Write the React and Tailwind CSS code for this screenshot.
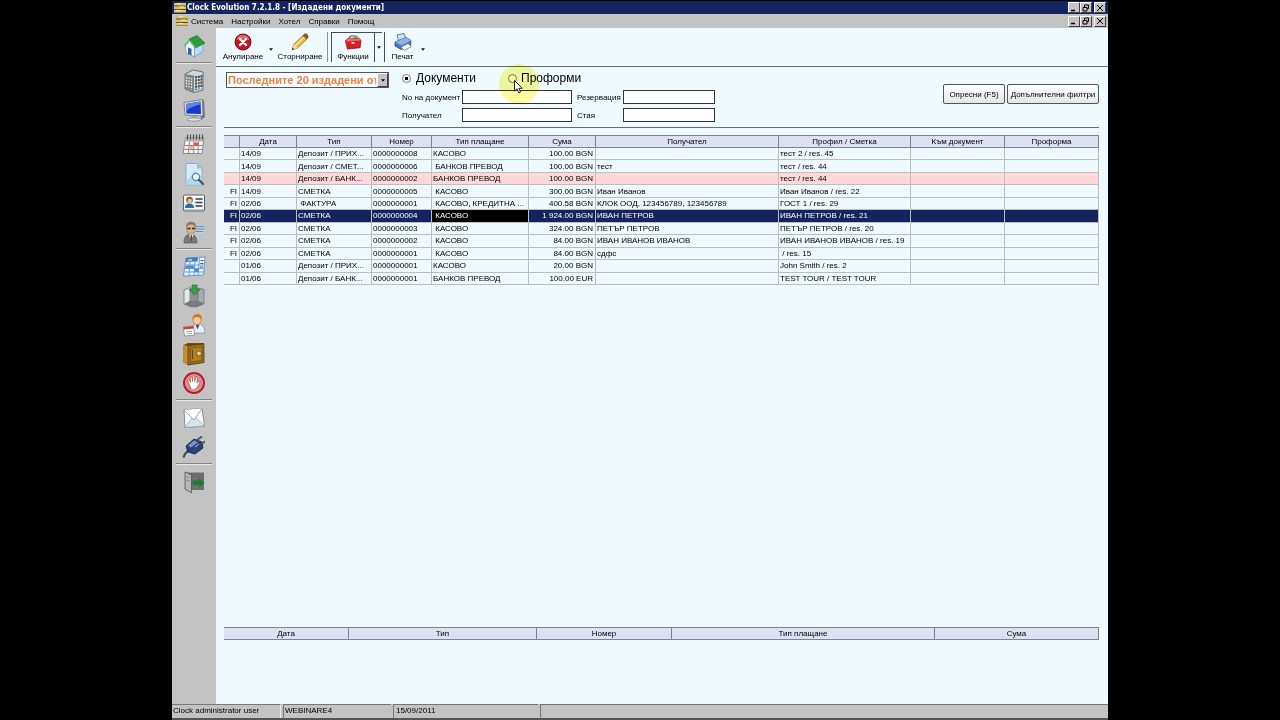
import React, { useState } from 'react';
import clsx from 'clsx';

/* ---------- Sidebar icons ---------- */

const HomeIcon = () => (
  <svg viewBox="0 0 24 24" className="size-6">
    <path d="M4 12v7l8 4V11z" fill="#7fb4e0" />
    <path d="M3.500 11.500 8 6l5 7v10l-9-4z" fill="#e9f4fc" stroke="#5d8fb8" strokeWidth=".6" />
    <path d="M12.500 12.500 21 9v8l-8.500 6z" fill="#bcdcf2" stroke="#5d8fb8" strokeWidth=".6" />
    <path d="m7 5 8-3.500 8 7.500-9.500 5z" fill="#2e9a38" stroke="#1c6a26" strokeWidth=".6" />
    <path d="M7 5 1.500 11.500l1.500.8L7.500 7l5 7 1.500-.5z" fill="#5cc460" />
    <path d="M6 13.500l3.500 1.300v6.700L6 20z" fill="#3a5f9a" />
  </svg>
);

const BuildingIcon = () => (
  <svg viewBox="0 0 24 24" className="size-6">
    <path d="m3 5 8-4 10 2v18l-9 2.500L3 20z" fill="#d3d8da" stroke="#55595d" strokeWidth=".8" />
    <path d="m3 5 9 1.500V23.500L3 20z" fill="#7d8488" />
    <path d="M4.500 8v11M7 8.500v11.500M9.500 9v12" stroke="#e8ecee" strokeWidth="1.300" strokeDasharray="1.600 1.200" />
    <path d="M14 7v14M16.800 6.700v13.500M19.400 6.200v13" stroke="#2f4f66" strokeWidth="1.900" strokeDasharray="2.200 1" />
    <path d="M14 10.200v2.200M19.400 12.500v2" stroke="#b64a50" strokeWidth="1.700" />
    <path d="M16.800 13v2" stroke="#3fa04c" strokeWidth="1.700" />
  </svg>
);

const MonitorIcon = () => (
  <svg viewBox="0 0 24 24" className="size-6">
    <path d="m18 4 4-2 1 17-4 3z" fill="#70777e" />
    <path d="M2 4.500 20.500 1.500 21 18 3 17z" fill="#d6dde2" stroke="#5d6368" strokeWidth=".7" />
    <path d="m4 6 14.500-2.500.5 12.500L4.500 15.500z" fill="#1836c8" />
    <path d="m4 6 14.500-2.500v3Q9 8 4.300 13z" fill="#5a83ee" />
    <path d="m9 17.500 6 .5 1 3H8z" fill="#a5abb0" />
    <ellipse cx="12" cy="21.500" rx="7" ry="1.600" fill="#dfe4e8" stroke="#6d7378" strokeWidth=".6" />
  </svg>
);

const CalendarIcon = () => (
  <svg viewBox="0 0 24 24" className="size-6">
    <path d="M3.500 4.500h18.500L20 20.500H1z" fill="#f4f2ef" stroke="#767676" strokeWidth=".8" />
    <path d="M3.500 4.500H22l-.5 4H3z" fill="#b6b2ae" />
    <path d="M5.500 1.500v5M8.500 1.500v5M11.500 1.500v5M14.500 1.500v5M17.500 1.500v5M20.500 1.500v5" stroke="#4e4e4e" strokeWidth="1.100" />
    <path d="M2.500 12.500h18.500M2 16.500h18.500M7.500 8.500l-1 12M12 8.500l-.5 12M16.500 8.500l-.5 12" stroke="#8f8b88" strokeWidth="1" />
    <path d="M12 9.500h4.500l-.3 3.500h-4.400z" fill="#e2583a" />
    <path d="M7.500 13h4v3h-4z" fill="#f3b29e" />
  </svg>
);

const SearchDocIcon = () => (
  <svg viewBox="0 0 24 24" className="size-6">
    <path d="M4 1.500h11l5 5V23H4z" fill="#d8ecf8" stroke="#7ba4bd" strokeWidth=".8" />
    <path d="M15 1.500v5h5z" fill="#93bcd6" />
    <path d="M4.500 19 13 9l7 6v7.500H4.500z" fill="#b3d8ee" />
    <circle cx="14" cy="15" r="3.600" fill="#eef8fd" stroke="#5b87a6" strokeWidth="1.300" />
    <path d="m16.800 17.800 4.200 4.200" stroke="#39566d" strokeWidth="2.200" strokeLinecap="round" />
  </svg>
);

const CardIcon = () => (
  <svg viewBox="0 0 24 24" className="size-6">
    <rect x="1.500" y="4" width="21" height="16" rx="1" fill="#f4f7f9" stroke="#5c666e" strokeWidth="1" />
    <path d="M2 18.500h20v1.200H2z" fill="#8a979f" />
    <circle cx="7.500" cy="9" r="3.300" fill="#8d5424" />
    <circle cx="7.800" cy="10" r="2.300" fill="#eec08f" />
    <path d="M3 17q0-4.500 4.500-4.500T12 17z" fill="#2d6fa4" />
    <path d="M13.500 8h7M13.500 11.500h7M13.500 15h7" stroke="#343f48" strokeWidth="1.400" />
  </svg>
);

const AgentIcon = () => (
  <svg viewBox="0 0 24 24" className="size-6">
    <path d="M13 5h9v8h-9z" fill="#b7d2e4" />
    <path d="M14 6.500h8M14 9h8M14 11.500h7" stroke="#658ca8" strokeWidth="1" />
    <path d="M2 23q-.5-8 6-9 7 0 7 9z" fill="#777b7e" stroke="#4c4f52" strokeWidth=".6" />
    <path d="m7 14 2 7 2.500-7z" fill="#f3f4f5" />
    <path d="m8.700 15 1.200 0 .3 5-1 1.500-1-1.500z" fill="#4b4b50" />
    <ellipse cx="9" cy="8.500" rx="4.600" ry="5.700" fill="#d6b18c" stroke="#77583b" strokeWidth=".5" />
    <path d="M4 8Q3.500 2 9 1.700T14 8q-1-3.500-5-3.500T4 8z" fill="#8b7761" />
    <path d="M5.500 8.500h3M10 8.500h3" stroke="#322b27" strokeWidth="1.300" />
  </svg>
);

const ScheduleIcon = () => (
  <svg viewBox="0 0 24 24" className="size-6">
    <path d="m4 3 19-1-1.500 18-20 1z" fill="#e6f2fb" stroke="#5584b8" strokeWidth=".8" />
    <path d="m4 3 12-.6-.4 4L3.500 7z" fill="#3a7fcc" />
    <path d="M6 5h4" stroke="#f2d067" strokeWidth="1.500" />
    <path d="M3.200 10h18.500M3 13.500h18.500M2.500 17h18.500M8 7l-1 14M13 7l-1 14M17.500 3l-1.500 17" stroke="#6fa1d3" strokeWidth="1" />
    <path d="M3.500 10.500h8.800v3H3.200zM12.500 14h4v3h-4z" fill="#4a8cd8" />
    <path d="M18.500 5.500h3M18.300 8.500h3M18 12h3" stroke="#345f94" strokeWidth="1.100" />
  </svg>
);

const ImportIcon = () => (
  <svg viewBox="0 0 24 24" className="size-6">
    <path d="M2 6 8 3.500V17l-6 3.500z" fill="#e4e7e8" stroke="#63676a" strokeWidth=".7" />
    <path d="M8 4h8v14H8z" fill="#8d9193" />
    <path d="m16 4 6 1.500V20l-6-3z" fill="#a9adae" stroke="#63676a" strokeWidth=".7" />
    <path d="m2 20.500 7-4h6.500l6.500 3.700-7 3H9z" fill="#777c7e" />
    <path d="M10 1h5v4.500h3L12.500 11 7 5.500h3z" fill="#35a047" stroke="#176b28" strokeWidth=".6" />
  </svg>
);

const StaffIcon = () => (
  <svg viewBox="0 0 24 24" className="size-6">
    <path d="M9 20q-.5-8.500 6-9.500 8 .5 8 9.500z" fill="#e8eef7" stroke="#7889a5" strokeWidth=".7" />
    <path d="m13.500 11.500 2 5 2-5z" fill="#2b4fa4" />
    <ellipse cx="15" cy="7" rx="4" ry="4.800" fill="#f6c898" stroke="#a9652e" strokeWidth=".5" />
    <path d="M10.500 7Q10 1 15.500 1T19.500 7q-1.500-3-4.500-3t-4.500 3z" fill="#d0791f" />
    <path d="m1.500 14 10-1 1 9-10 1z" fill="#fff" stroke="#77808c" strokeWidth=".7" />
    <path d="m1.500 14 10-1 .2 2.500-10 1z" fill="#d73a2f" />
    <path d="M4 18.500h6M4.200 20.700h6" stroke="#8f99a8" strokeWidth=".8" />
  </svg>
);

const SafeIcon = () => (
  <svg viewBox="0 0 24 24" className="size-6">
    <path d="M1.500 3 6 1h16v19.500L6 23l-4.500-2.500z" fill="#6f4c11" />
    <path d="M1.500 3 6 4v19l-4.500-2.500z" fill="#c0912c" />
    <path d="M6 3.500 22 2v18.500L6 23z" fill="#9b6f1b" stroke="#4d3409" strokeWidth=".7" />
    <path d="M8.500 6 20 5v13.500L8.500 20z" fill="#ad8026" stroke="#664711" strokeWidth=".6" />
    <circle cx="17" cy="11.500" r="2.400" fill="#efd27b" stroke="#60430e" strokeWidth=".7" />
    <path d="M10.500 8v9" stroke="#60430e" strokeWidth="1" />
  </svg>
);

const StopIcon = () => (
  <svg viewBox="0 0 24 24" className="size-6">
    <circle cx="12" cy="12" r="10" fill="#e09a9b" stroke="#b3202c" strokeWidth="2" />
    <circle cx="12" cy="12" r="8" fill="#dd8a8c" />
    <path
      d="M7 12.500 5.800 9q.8-1.200 1.600 0l1.200 2.500-.4-5q.9-1.500 1.700 0l.7 4 .2-5q1-1.300 1.800 0l.2 5 1-4.300q1-1.200 1.700.2l-.6 5.600 1.700-1.500q1.400-.3 1.300.8l-3.400 6.200q-3 2.500-5.500.5z"
      fill="#fff"
      stroke="#9b2830"
      strokeWidth=".5"
    />
  </svg>
);

const MailIcon = () => (
  <svg viewBox="0 0 24 24" className="size-6">
    <path d="m2 4 18-1.500L22.500 20 3 21.500z" fill="#f5f9fb" stroke="#6f7f8c" strokeWidth=".8" />
    <path d="M3 21.500 10 12l4-.5 8.500 8.500z" fill="#d5e2ea" stroke="#8797a3" strokeWidth=".6" />
    <path d="m2 4 10 10L20 2.500" fill="#fff" stroke="#8797a3" strokeWidth=".8" />
  </svg>
);

const PlugIcon = () => (
  <svg viewBox="0 0 24 24" className="size-6">
    <path d="M1.500 22.500Q3 17 8 15" fill="none" stroke="#3a424d" strokeWidth="2" />
    <path d="m4 11 8-7 8 3 1 6-8 6-7-2z" fill="#2a4277" stroke="#131f3e" strokeWidth=".8" />
    <path d="m6 10.500 6-5 4 2-7 5z" fill="#7792c8" />
    <path d="m15 5 5-3.500M19 9l4-2.500" stroke="#4d5560" strokeWidth="1.800" />
    <path d="m13 12 4-3" stroke="#b9c8e6" strokeWidth="1" />
  </svg>
);

const ExitIcon = () => (
  <svg viewBox="0 0 24 24" className="size-6">
    <path d="M3 2.500h19V20H3z" fill="#6b706e" />
    <path d="M3 2 9.500 5v18L3 19z" fill="#b4b8b7" stroke="#505452" strokeWidth=".8" />
    <path d="M4 6.500l4 1.500M4 10l4 1.200" stroke="#7b817f" strokeWidth=".8" />
    <path d="M10.500 10.500H17V8l5.500 4.700-5.500 4.800V15h-6.500z" fill="#1f7d33" />
  </svg>
);

/* ---------- Toolbar icons ---------- */

const CancelIcon = () => (
  <svg viewBox="0 0 20 20" className="size-5">
    <circle cx="10" cy="10" r="8" fill="#c31722" stroke="#7d0c14" strokeWidth="1" />
    <path d="M3.500 8Q5 3 10 3t6.500 5Q10 6 3.500 8z" fill="#e7686b" />
    <path d="m7 7 6 6M13 7l-6 6" stroke="#fff" strokeWidth="2.400" strokeLinecap="round" />
  </svg>
);

const PencilIcon = () => (
  <svg viewBox="0 0 20 20" className="size-5">
    <path d="m2 18 1.500-5.500L13 3.500l4 3.500-9.500 9z" fill="#f7b93c" stroke="#9a6312" strokeWidth=".7" />
    <path d="m5 14 9.500-9" stroke="#ffe49b" strokeWidth="1.600" />
    <path d="m13 3.500 2-1.800q2.500-.5 3.200 3.300L17 7z" fill="#8f5a3c" stroke="#5f3520" strokeWidth=".6" />
    <path d="m2 18 1.500-5.500 4 3.500z" fill="#f6dfb8" />
    <path d="m2 18 .6-2.200L4.300 17z" fill="#2b2b2b" />
  </svg>
);

const ToolboxIcon = () => (
  <svg viewBox="0 0 20 20" className="size-5">
    <path d="M6 6q0-3 4-3t5 2.500" fill="none" stroke="#68727a" strokeWidth="1.300" />
    <path d="m10 4 3-2 3 2.500-4 3z" fill="#7fae68" />
    <path d="m2 8 3-2.500 12 .5 1.500 2-1 7.500L4 17z" fill="#d5202a" stroke="#851018" strokeWidth=".7" />
    <path d="m2 8 3-2.500 12 .5 1.500 2-13 1z" fill="#f0686a" />
    <path d="M8.500 9.500h3v2h-3z" fill="#f0d9a2" />
  </svg>
);

const PrinterIcon = () => (
  <svg viewBox="0 0 20 20" className="size-5">
    <path d="m4 3 7-1.500 2 5.500-7 3z" fill="#cfe3f8" stroke="#3d689f" strokeWidth=".8" />
    <path d="m2 10 11-4.500 5 3-.5 5-9 4L2 14z" fill="#4577bf" stroke="#26487c" strokeWidth=".8" />
    <path d="m2 10 6.500 3.500L18 8.500l-5-3z" fill="#8db2e4" />
    <path d="m8 15 7-3.500 3.500 3-7.500 4z" fill="#fff" stroke="#3d689f" strokeWidth=".7" />
  </svg>
);

const AppIcon = () => (
  <svg viewBox="0 0 12 10" className="h-[10px] w-3">
    <path d="M0 0h12v10H0z" fill="#6b5318" />
    <path d="M0 0h12v2.500H0zM0 3.500h12V6H0zM0 7h12v2.500H0z" fill="#dcc274" />
    <path d="M3 .5h4M5 4h5M2 7.500h5" stroke="#fff2bd" strokeWidth=".8" />
  </svg>
);

const Caret = () => (
  <svg viewBox="0 0 5 3" className="h-[3px] w-1">
    <path d="M0 0h5L2.500 3z" fill="#111" />
  </svg>
);

const sidebarGroups = [
  [{ label: 'Home', icon: HomeIcon }],
  [
    { label: 'Hotel', icon: BuildingIcon },
    { label: 'Terminal', icon: MonitorIcon },
  ],
  [
    { label: 'Calendar', icon: CalendarIcon },
    { label: 'Search', icon: SearchDocIcon },
    { label: 'Profiles', icon: CardIcon },
    { label: 'Agents', icon: AgentIcon },
  ],
  [
    { label: 'Schedule', icon: ScheduleIcon },
    { label: 'Import', icon: ImportIcon },
    { label: 'Staff', icon: StaffIcon },
    { label: 'Safe', icon: SafeIcon },
    { label: 'Stop', icon: StopIcon },
  ],
  [
    { label: 'Mail', icon: MailIcon },
    { label: 'Connection', icon: PlugIcon },
  ],
  [{ label: 'Exit', icon: ExitIcon }],
];

const menuItems = ['Система', 'Настройки', 'Хотел', 'Справки', 'Помощ'];

const columns = [
  { label: '', width: 'w-4' },
  { label: 'Дата', width: 'w-[57px]' },
  { label: 'Тип', width: 'w-[75px]' },
  { label: 'Номер', width: 'w-[60px]' },
  { label: 'Тип плащане', width: 'w-[97px]' },
  { label: 'Сума', width: 'w-[67px]' },
  { label: 'Получател', width: 'w-[183px]' },
  { label: 'Профил / Сметка', width: 'w-[132px]' },
  { label: 'Към документ', width: 'w-[94px]' },
  { label: 'Проформа', width: 'w-[94px]' },
];

const rows = [
  ['', '14/09', 'Депозит / ПРИХ...', '0000000008', 'КАСОВО', '100.00 BGN', '', 'тест 2 / res. 45'],
  ['', '14/09', 'Депозит / СМЕТ...', '0000000006', ' БАНКОВ ПРЕВОД', '100.00 BGN', 'тест', 'тест / res. 44'],
  ['', '14/09', 'Депозит / БАНК...', '0000000002', 'БАНКОВ ПРЕВОД', '100.00 BGN', '', 'тест / res. 44'],
  ['FI', '14/09', 'СМЕТКА', '0000000005', ' КАСОВО', '300.00 BGN', 'Иван Иванов', 'Иван Иванов / res. 22'],
  ['FI', '02/06', ' ФАКТУРА', '0000000001', ' КАСОВО, КРЕДИТНА ...', '400.58 BGN', 'КЛОК ООД, 123456789, 123456789', 'ГОСТ 1 / res. 29'],
  ['FI', '02/06', 'СМЕТКА', '0000000004', ' КАСОВО', '1 924.00 BGN', 'ИВАН ПЕТРОВ', 'ИВАН ПЕТРОВ / res. 21'],
  ['FI', '02/06', 'СМЕТКА', '0000000003', ' КАСОВО', '324.00 BGN', 'ПЕТЪР ПЕТРОВ', 'ПЕТЪР ПЕТРОВ / res. 20'],
  ['FI', '02/06', 'СМЕТКА', '0000000002', ' КАСОВО', '84.00 BGN', 'ИВАН ИВАНОВ ИВАНОВ', 'ИВАН ИВАНОВ ИВАНОВ / res. 19'],
  ['FI', '02/06', 'СМЕТКА', '0000000001', ' КАСОВО', '84.00 BGN', 'сдфс', ' / res. 15'],
  ['', '01/06', 'Депозит / ПРИХ...', '0000000001', 'КАСОВО', '20.00 BGN', '', 'John Smith / res. 2'],
  ['', '01/06', 'Депозит / БАНК...', '0000000001', 'БАНКОВ ПРЕВОД', '100.00 EUR', '', 'TEST TOUR / TEST TOUR'],
];

const detailColumns = [
  { label: 'Дата', width: 'w-[125px]' },
  { label: 'Тип', width: 'w-[188px]' },
  { label: 'Номер', width: 'w-[135px]' },
  { label: 'Тип плащане', width: 'w-[263px]' },
  { label: 'Сума', width: 'w-[164px]' },
];

const WindowButton = ({ label, children }) => (
  <button
    aria-label={label}
    className="flex h-[11px] w-3 items-center justify-center border border-t-white border-l-white border-r-[#404040] border-b-[#404040] bg-[#c6c3c6]"
  >
    <svg viewBox="0 0 8 8" className="size-2" fill="none" stroke="#000">
      {children}
    </svg>
  </button>
);

const WindowButtons = () => (
  <div className="ml-auto flex pr-[2px]">
    <WindowButton label="Minimize">
      <path d="M1 6.500h4" strokeWidth="1.500" />
    </WindowButton>
    <WindowButton label="Restore">
      <path d="M2.500 3V1h4v3.500H5M1 3.500h4V7H1z" />
    </WindowButton>
    <div className="w-[2px]" />
    <WindowButton label="Close">
      <path d="m1 1 6 6M7 1 1 7" />
    </WindowButton>
  </div>
);

const ToolButton = ({ label, icon: Icon, className }) => (
  <button className={clsx('flex flex-col items-center', className)}>
    <Icon />
    <span className="leading-[10px]">{label}</span>
  </button>
);

const TableHead = ({ items }) => (
  <thead>
    <tr className="h-[13px] bg-[#dde2f2]">
      {items.map((col, i) => (
        <th
          key={i}
          className={clsx(
            'border-y border-r border-[#80838f] p-0 text-center font-normal whitespace-nowrap',
            col.width
          )}
        >
          {col.label}
        </th>
      ))}
    </tr>
  </thead>
);

const fieldClass = 'h-[14px] w-full border border-[#333] bg-white px-1 text-[8px] outline-none';

const App = () => {
  const [selected, setSelected] = useState(5);
  const [mode, setMode] = useState('documents');

  return (
    <div className="flex min-h-screen justify-center bg-black pt-px font-['Liberation_Sans',Arial,sans-serif] text-[8px] leading-[11px] text-black">
      <div className="flex w-full max-w-[936px] flex-col bg-[#c3c3c3]">
        {/* Title bar */}
        <header className="flex h-[13px] items-center bg-[#13245f] pl-[2px] text-white">
          <AppIcon />
          <h1 className="ml-px font-['DejaVu_Sans_Condensed','Liberation_Sans',sans-serif] font-bold">
            Clock Evolution 7.2.1.8 - [Издадени документи]
          </h1>
          <WindowButtons />
        </header>

        {/* Menu */}
        <nav className="flex h-[14px] items-center pl-1">
          <AppIcon />
          <div className="ml-[3px] flex gap-2">
            {menuItems.map((item) => (
              <button key={item}>{item}</button>
            ))}
          </div>
          <WindowButtons />
        </nav>

        <div className="flex flex-1">
          {/* Sidebar */}
          <aside className="w-11 shrink-0 pt-[3px]">
            {sidebarGroups.map((group, i) => (
              <div key={i}>
                {i > 0 && <div className="mx-1 my-[2px] h-[2px] border-t border-b border-t-[#858585] border-b-[#e6e6e6]" />}
                {group.map(({ label, icon: Icon }) => (
                  <button key={label} aria-label={label} className="flex h-[29px] w-full items-center justify-center">
                    <Icon />
                  </button>
                ))}
              </div>
            ))}
          </aside>

          <main className="flex min-w-0 flex-1 flex-col bg-[#eefafd]">
            {/* Toolbar */}
            <div className="flex h-[39px] items-stretch border-b border-[#666b6e] pt-1 pl-1">
              <ToolButton label="Анулиране" icon={CancelIcon} className="w-[46px]" />
              <button aria-label="Анулиране меню" className="flex w-[10px] items-center justify-center">
                <Caret />
              </button>
              <ToolButton label="Сторниране" icon={PencilIcon} className="w-12" />
              <div className="mb-1 ml-[3px] w-px bg-[#8b9194]" />
              <div className="mb-1 ml-[3px] flex border-t border-l border-[#4a4e50]">
                <ToolButton label="Функции" icon={ToolboxIcon} className="w-[42px]" />
                <button
                  aria-label="Функции меню"
                  className="flex w-2 items-center justify-center border-l border-[#4a4e50]"
                >
                  <Caret />
                </button>
              </div>
              <div className="mb-1 ml-[2px] w-px bg-[#4a4e50]" />
              <ToolButton label="Печат" icon={PrinterIcon} className="w-[35px]" />
              <button aria-label="Печат меню" className="flex w-[5px] items-center justify-center">
                <Caret />
              </button>
            </div>

            {/* Filters */}
            <div className="mr-[9px] ml-2 flex h-[61px] items-start border-b border-[#666b6e] pt-1 pl-[2px]">
              <div className="relative mt-px w-[163px]">
                <select
                  aria-label="Филтър"
                  className="h-4 w-full appearance-none border border-[#555] bg-[#f5fbfc] pr-3 pl-px text-[11px] leading-[14px] font-bold text-[#ee8146]"
                >
                  <option>Последните 20 издадени от всички</option>
                </select>
                <div className="pointer-events-none absolute top-px right-px flex h-[14px] w-[11px] items-center justify-center border border-t-white border-l-white border-r-[#404040] border-b-[#404040] bg-[#c6c3c6]">
                  <Caret />
                </div>
              </div>

              <div className="ml-[13px] w-[313px]">
                <div className="flex h-[14px] items-center text-[12px]">
                  <label className="flex w-[106px] items-center gap-[5px]">
                    <input
                      type="radio"
                      name="mode"
                      checked={mode === 'documents'}
                      onChange={() => setMode('documents')}
                      className="size-[9px] appearance-none rounded-full border border-[#777] bg-white bg-radial from-black from-30% to-white to-40%"
                    />
                    Документи
                  </label>
                  <label className="relative flex items-center gap-1">
                    <input
                      type="radio"
                      name="mode"
                      checked={mode === 'proforma'}
                      onChange={() => setMode('proforma')}
                      className="size-[9px] appearance-none rounded-full border border-[#777] bg-white checked:bg-radial checked:from-black checked:from-30% checked:to-white checked:to-40%"
                    />
                    Проформи
                    {/* Pointer highlight */}
                    <span className="pointer-events-none absolute -top-[9px] -left-[9px] size-10 rounded-full bg-[#fdfaa0] mix-blend-multiply" />
                    <svg viewBox="0 0 9 14" className="pointer-events-none absolute top-[7px] left-[6px] h-[14px] w-[9px]">
                      <path d="M.5.500v10.500L3 8.800l1.800 4 1.700-.8-1.700-3.700h3.500z" fill="#fff" stroke="#222" />
                    </svg>
                  </label>
                </div>
                <div className="mt-[5px] grid grid-cols-[60px_110px_51px_92px] items-center gap-y-1">
                  <label htmlFor="docNo" className="whitespace-nowrap">No на документ</label>
                  <input id="docNo" className={fieldClass} />
                  <label htmlFor="reservation" className="pl-[5px]">Резервация</label>
                  <input id="reservation" className={fieldClass} />
                  <label htmlFor="recipient">Получател</label>
                  <input id="recipient" className={fieldClass} />
                  <label htmlFor="room" className="pl-[5px]">Стая</label>
                  <input id="room" className={fieldClass} />
                </div>
              </div>

              <div className="mt-[13px] ml-auto flex gap-[2px]">
                <button className="h-5 w-[62px] rounded-xs border border-[#555] bg-linear-to-b from-white to-[#e4e8e9]">
                  Опресни (F5)
                </button>
                <button className="h-5 w-[92px] rounded-xs border border-[#555] bg-linear-to-b from-white to-[#e4e8e9] whitespace-nowrap">
                  Допълнителни филтри
                </button>
              </div>
            </div>

            {/* Documents */}
            <div className="mt-[7px] mr-[9px] ml-2 flex-1">
              <table className="h-[150px] w-full table-fixed border-separate border-spacing-0">
                <TableHead items={columns} />
                <tbody>
                  {rows.map((row, r) => {
                    const isSelected = r === selected;
                    return (
                      <tr
                        key={r}
                        onClick={() => setSelected(r)}
                        className={clsx(isSelected ? 'bg-[#13245f] text-white' : r === 2 && 'bg-[#ffd9d9]')}
                      >
                        {columns.map((col, c) => (
                          <td
                            key={col.label}
                            className={clsx(
                              'overflow-hidden border-r border-b border-[#bdbdbd] p-0 leading-[11px] whitespace-pre',
                              c === 0 && 'pr-[2px] text-right',
                              c === 5 && 'pr-[2px] text-right',
                              c !== 0 && c !== 5 && 'pl-px',
                              isSelected && c === 4 && 'bg-black'
                            )}
                          >
                            {row[c]}
                          </td>
                        ))}
                      </tr>
                    );
                  })}
                </tbody>
              </table>
            </div>

            {/* Payments of the selected document */}
            <div className="mr-[9px] mb-16 ml-2">
              <table className="w-full table-fixed border-separate border-spacing-0">
                <TableHead items={detailColumns} />
              </table>
            </div>
          </main>
        </div>

        {/* Status bar */}
        <footer className="flex h-4 gap-[2px] border-b-2 border-[#555] leading-[12px]">
          <div className="w-[109px] border-t border-r border-t-[#777] border-r-[#eee] pl-px">Clock administrator user</div>
          <div className="w-[108px] border-t border-l border-[#777] pl-px">WEBINARE4</div>
          <div className="w-[145px] border-t border-l border-[#777] pl-[2px]">15/09/2011</div>
          <div className="flex-1 border-t border-l border-[#777]" />
        </footer>
      </div>
    </div>
  );
};

export default App;
